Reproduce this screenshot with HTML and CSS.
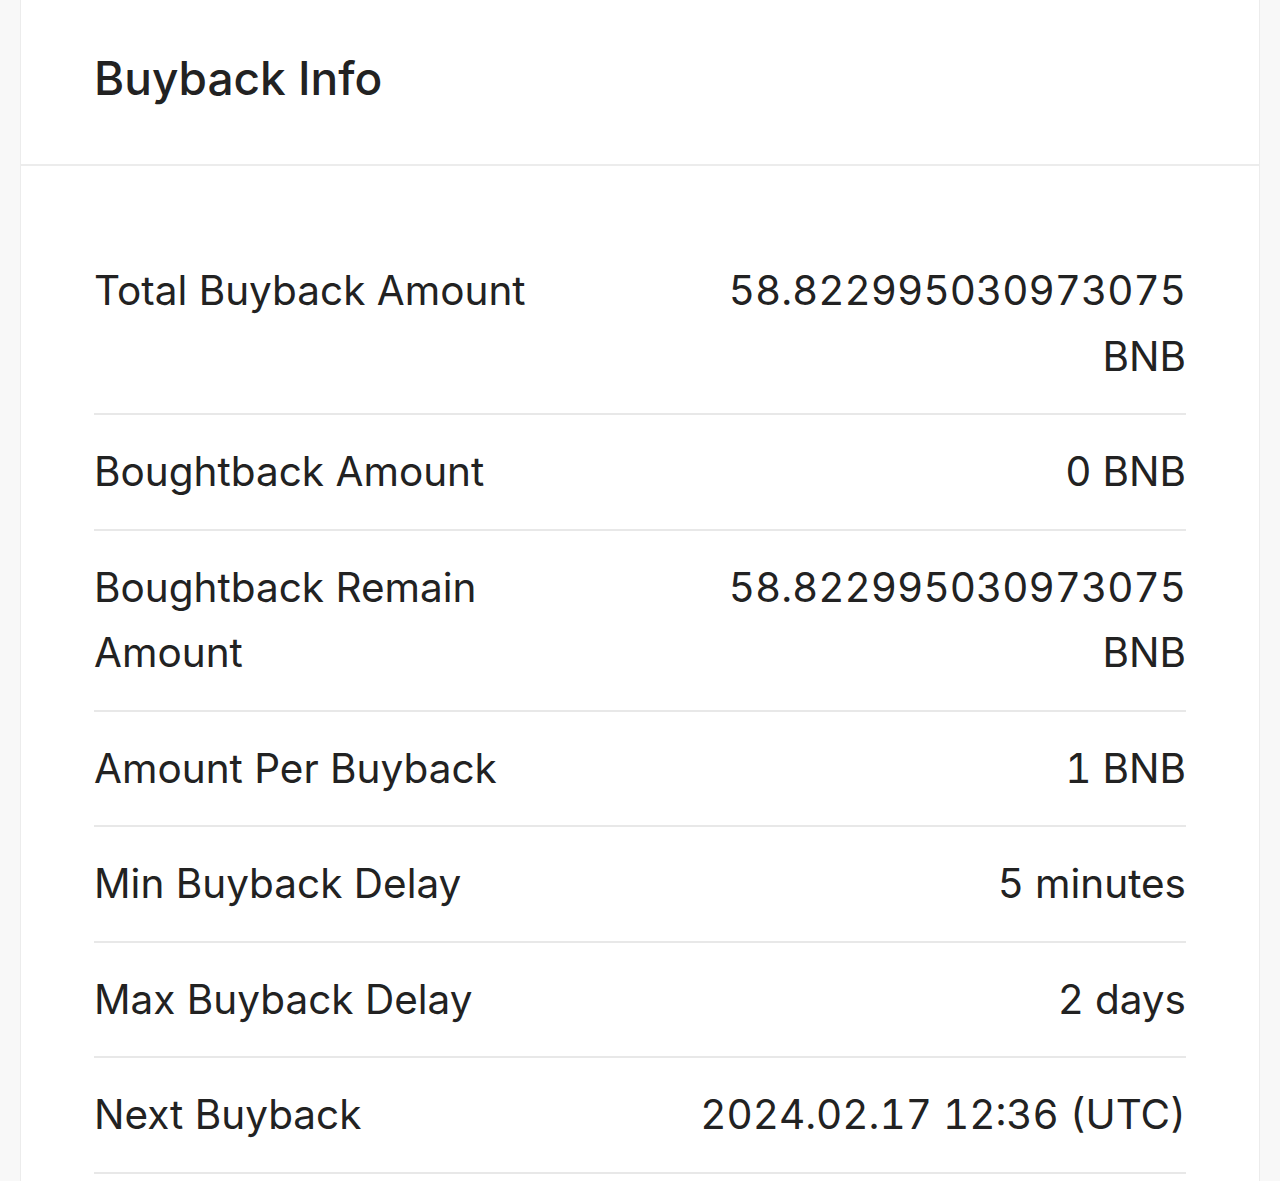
FILE: index.html
```html
<!DOCTYPE html>
<html lang="en">
<head>
  <meta charset="UTF-8">
  <title>Buyback Info</title>
  <link rel="stylesheet" href="styles.css">
</head>
<body>
  <div class="card">
    <div class="card-header">
      <h2>Buyback Info</h2>
    </div>
    <div class="card-body">
      <div class="info-row">
        <div class="label">Total Buyback Amount</div>
        <div class="value">58.822995030973075 BNB</div>
      </div>
      <div class="info-row">
        <div class="label">Boughtback Amount</div>
        <div class="value">0 BNB</div>
      </div>
      <div class="info-row">
        <div class="label">Boughtback Remain Amount</div>
        <div class="value">58.822995030973075 BNB</div>
      </div>
      <div class="info-row">
        <div class="label">Amount Per Buyback</div>
        <div class="value">1 BNB</div>
      </div>
      <div class="info-row">
        <div class="label">Min Buyback Delay</div>
        <div class="value">5 minutes</div>
      </div>
      <div class="info-row">
        <div class="label">Max Buyback Delay</div>
        <div class="value">2 days</div>
      </div>
      <div class="info-row">
        <div class="label">Next Buyback</div>
        <div class="value">2024.02.17 12:36 (UTC)</div>
      </div>
    </div>
  </div>
</body>
</html>
```

FILE: styles.css
```css
* {
  padding: 0;
  margin: 0;
  box-sizing: border-box;
}

body {
  font-family: 'Inter', 'Roboto', sans-serif;
  background: #f8f8f8;
  color: #222;
  padding: 0 20px;
}

.card {
  background: #fff;
  min-height: 100vh;
  border-left: 1px solid #ececec;
  border-right: 1px solid #ececec;
}

/* Header */
.card-header {
  height: 166px;
  padding: 50px 73px 0;
  border-bottom: 2px solid #ececec;
}

.card-header h2 {
  font-size: 46px;
  font-weight: 500;
  line-height: 56px;
}

/* Rows */
.card-body {
  padding: 68px 73px 0;
}

.info-row {
  display: grid;
  grid-template-columns: minmax(0, 1fr) minmax(0, 1fr);
  column-gap: 40px;
  padding: 24px 0;
  border-bottom: 2px solid #e8e8e8;
  font-size: 40.5px;
  line-height: 65.5px;
}

.value {
  text-align: right;
  font-variant-numeric: tabular-nums;
}
```
